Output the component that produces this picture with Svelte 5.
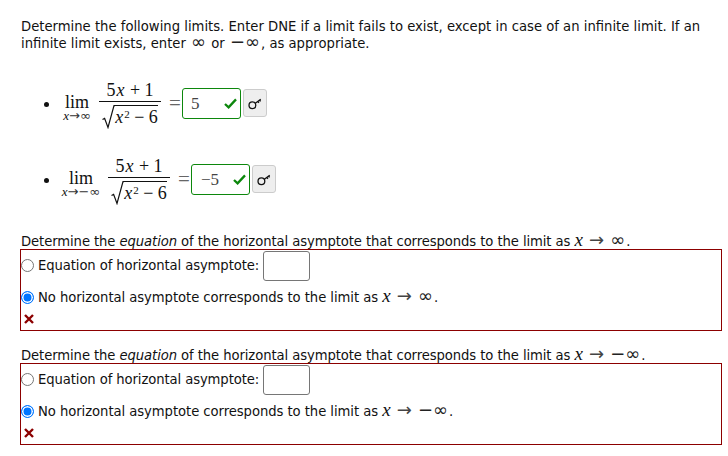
<script>
  const limits = [
    { sub: "∞", neg: false, answer: "5" },
    { sub: "−∞", neg: true, answer: "−5" },
  ];

  const asymptotes = [
    { to: "∞" },
    { to: "−∞" },
  ];
</script>

<div class="page">
  <p class="intro">
    Determine the following limits. Enter DNE if a limit fails to exist, except in case of an infinite limit. If an<br />
    infinite limit exists, enter <span class="inf">∞</span> or <span class="inf">−∞</span>, as appropriate.
  </p>

  <ul class="limits">
    {#each limits as l}
      <li class:neg={l.neg}>
        <span class="lim">
          <span class="lim-word">lim</span>
          <span class="lim-sub"><i>x</i><span class="sub-sym">→{l.sub}</span></span>
        </span>
        <span class="frac">
          <span class="num">5<i>x</i> + 1</span>
          <span class="den">
            <svg class="radical" width="13" height="24" viewBox="0 0 13 24">
              <path d="M0.5 14.5 L2.6 13.4 L6 22.5 L12 0.6 L13 0.6" fill="none" stroke="#111" stroke-width="1.2" />
            </svg>
            <span class="radicand"><i>x</i><sup>2</sup> − 6</span>
          </span>
        </span>
        <span class="eq">=</span>
        <span class="answer">
          <span class="value">{l.answer}</span>
          <svg class="check" width="13" height="11" viewBox="0 0 13 11">
            <path d="M1 6 L4.6 9.4 L12 1.4" fill="none" stroke="#0c870c" stroke-width="2.3" />
          </svg>
        </span>
        <button class="key" aria-label="Show answer">
          <svg width="14" height="13" viewBox="0 0 16 15">
            <circle cx="5" cy="9.6" r="3.9" fill="none" stroke="#111" stroke-width="1.5" />
            <path d="M8 7.4 L14.6 2.6 M11 5 L12.6 6.6 M13 3.7 L14.6 5" fill="none" stroke="#111" stroke-width="1.5" />
          </svg>
        </button>
      </li>
    {/each}
  </ul>

  {#each asymptotes as a}
    <section class="asym">
      <p class="lead">
        Determine the <em>equation</em> of the horizontal asymptote that corresponds to the limit as
        <span class="mx">x</span> <span class="arrow">→</span> <span class="inf">{a.to}</span>.
      </p>
      <div class="box">
        <label class="row first">
          <span class="radio"></span>
          <span class="tight">Equation of horizontal asymptote:</span>
          <span class="field"></span>
        </label>
        <label class="row second">
          <span class="radio on"></span>
          <span class="slight">No horizontal asymptote corresponds to the limit as
            <span class="mx">x</span> <span class="arrow">→</span> <span class="inf">{a.to}</span>.</span>
        </label>
        <svg class="cross" width="10" height="10" viewBox="0 0 10 10">
          <path d="M1 1 L9 9 M9 1 L1 9" stroke="#8c0000" stroke-width="2.4" />
        </svg>
      </div>
    </section>
  {/each}
</div>

<style>
  :global(body) {
    margin: 0;
    background: #fff;
  }

  .page {
    width: 728px;
    height: 456px;
    overflow: hidden;
    box-sizing: border-box;
    padding: 18px 7px 0 21px;
    font-family: "DejaVu Sans", sans-serif;
    font-size: 13.2px;
    line-height: 17px;
    color: #111;
  }

  p { margin: 0; white-space: nowrap; }

  .inf {
    font-family: "DejaVu Sans", sans-serif;
    font-size: 18px;
    line-height: 14px;
    color: #222;
    letter-spacing: 0;
    margin: 0 1px;
  }

  .mx {
    font-family: "Liberation Serif", serif;
    font-style: italic;
    font-size: 19px;
    line-height: 14px;
    letter-spacing: 0;
    margin-right: 2px;
  }

  .arrow {
    font-family: "DejaVu Sans", sans-serif;
    font-size: 18px;
    line-height: 14px;
    color: #444;
    letter-spacing: 0;
    margin-right: 1px;
  }

  .tight { letter-spacing: -0.1px; }
  .slight { letter-spacing: -0.06px; }

  .limits {
    list-style: none;
    margin: 0;
    padding: 0;
    font-family: "Liberation Serif", serif;
  }

  .limits li {
    position: relative;
    display: flex;
    align-items: center;
    height: 50px;
    padding-left: 40px;
    margin-top: 26px;
  }

  .limits li::before {
    content: "";
    position: absolute;
    left: 23px;
    top: 24px;
    width: 5px;
    height: 5px;
    border-radius: 50%;
    background: #111;
  }

  .lim {
    display: flex;
    flex-direction: column;
    align-items: center;
    width: 40px;
    margin: 10px 7px 0 0;
  }

  .limits li:not(.neg) .lim { width: 32px; margin-right: 6px; }

  .lim-word {
    font-size: 18px;
    line-height: 15px;
  }

  .lim-sub {
    font-size: 13px;
    line-height: 11px;
    white-space: nowrap;
  }

  .sub-sym {
    font-family: "DejaVu Sans", sans-serif;
    font-size: 13px;
    color: #333;
  }

  .frac {
    display: flex;
    flex-direction: column;
    align-items: center;
    width: 62px;
  }

  .num {
    font-size: 18px;
    line-height: 22px;
    padding-top: 1px;
    border-bottom: 1px solid #111;
    width: 100%;
    text-align: center;
    white-space: nowrap;
  }

  .num i { margin: 0 1px; }

  .den {
    display: flex;
    align-items: flex-start;
    margin-top: 3px;
    white-space: nowrap;
  }

  .radicand {
    border-top: 1px solid #111;
    font-size: 18px;
    line-height: 23px;
  }

  sup {
    font-size: 11px;
    line-height: 0;
    vertical-align: 5px;
    margin-left: 1px;
  }

  .eq {
    font-size: 21px;
    line-height: 21px;
    color: #666;
    margin-left: 8px;
    width: 13px;
  }

  .answer {
    display: flex;
    align-items: center;
    box-sizing: border-box;
    width: 59px;
    height: 31px;
    border: 1px solid #0c870c;
    border-radius: 3px;
    font-size: 17px;
    color: #444;
    padding-right: 3px;
  }

  .value {
    flex: 1;
    padding-left: 8px;
  }

  .neg .value { padding-left: 9px; }

  .key {
    display: flex;
    align-items: center;
    justify-content: center;
    box-sizing: border-box;
    width: 24px;
    height: 28px;
    margin-left: 2px;
    padding: 0;
    background: #eee;
    border: 1px solid #ccc;
    border-radius: 3px;
  }

  .limits + .asym { margin-top: 29px; }
  .asym + .asym { margin-top: 16px; }

  .lead { height: 16px; letter-spacing: -0.09px; }

  .box {
    box-sizing: border-box;
    width: 702px;
    height: 82px;
    margin-left: -1px;
    border: 1px solid #8c0000;
  }

  .row {
    display: flex;
    align-items: center;
    gap: 4px;
    white-space: nowrap;
  }

  .first { height: 31px; }
  .second { height: 17px; margin-top: 8px; }

  .radio {
    box-sizing: border-box;
    width: 13px;
    height: 13px;
    border: 1px solid #767676;
    border-radius: 50%;
    background: #fff;
    flex-shrink: 0;
  }

  .radio.on {
    border: 1px solid #0075ff;
    background: #0075ff;
    box-shadow: inset 0 0 0 1.5px #fff;
  }

  .field {
    box-sizing: border-box;
    width: 47px;
    height: 30px;
    border: 1px solid #767676;
    border-radius: 3px;
  }

  .cross {
    display: block;
    margin: 8px 0 0 3px;
  }
</style>
